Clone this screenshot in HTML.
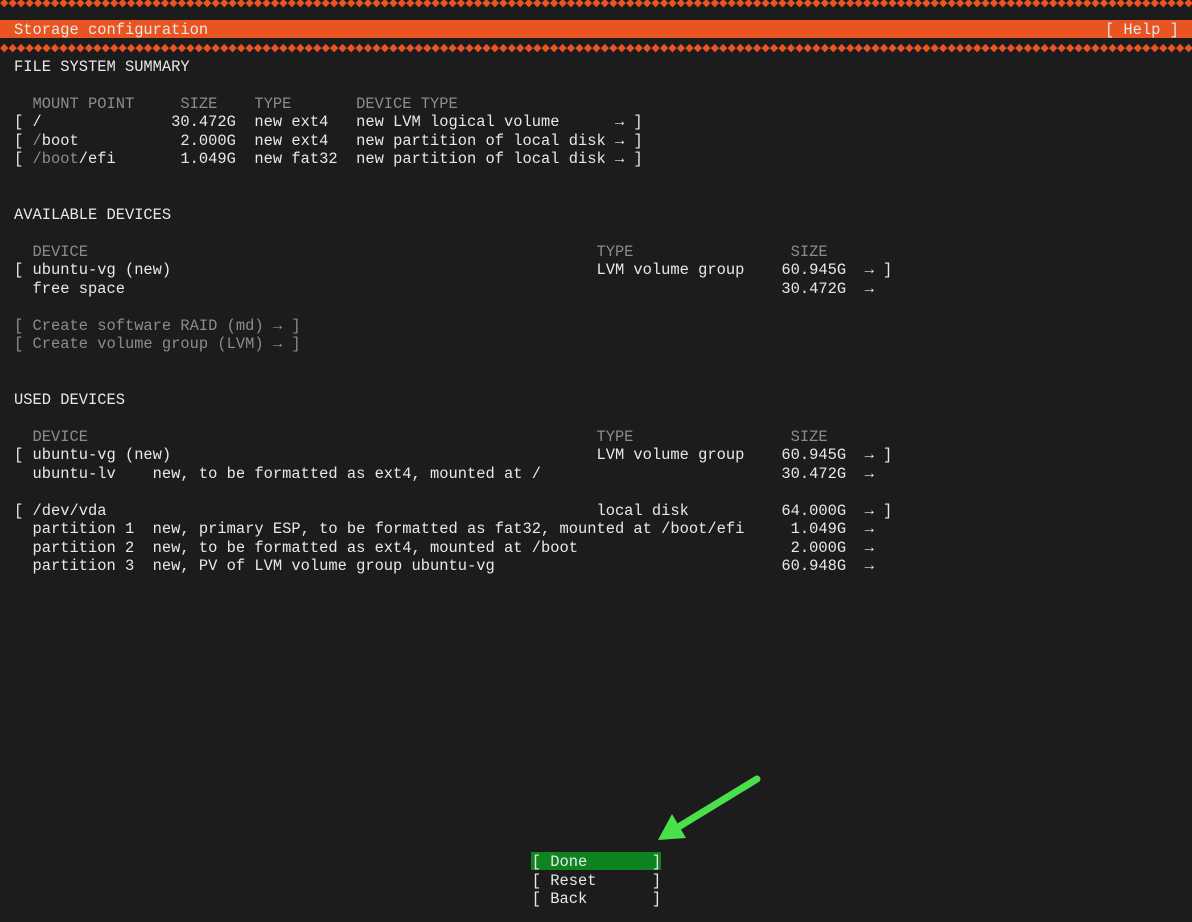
<!DOCTYPE html>
<html><head><meta charset="utf-8"><style>
html,body{margin:0;padding:0;background:#1c1c1c;width:1192px;height:922px;overflow:hidden}
pre{position:absolute;left:14px;top:2px;margin:0;font-family:"Liberation Mono","DejaVu Sans Mono",monospace;font-size:15.42px;line-height:18.5px;color:#e8e8e8;white-space:pre}
.d{color:#8c8c8c}
.bar{position:absolute;left:0;top:20px;width:1192px;height:18.45px;background:#e95420}
.dia{position:absolute;left:0;width:1192px;height:14px;overflow:hidden;color:#e95420;font-family:"DejaVu Sans",sans-serif;font-size:11px;line-height:14px;white-space:nowrap;letter-spacing:0px}
.btn{position:absolute;left:531px;top:851.5px;width:130px;height:18.45px;background:#0e8420}
</style></head><body>
<div class="dia" style="top:-4px">◆◆◆◆◆◆◆◆◆◆◆◆◆◆◆◆◆◆◆◆◆◆◆◆◆◆◆◆◆◆◆◆◆◆◆◆◆◆◆◆◆◆◆◆◆◆◆◆◆◆◆◆◆◆◆◆◆◆◆◆◆◆◆◆◆◆◆◆◆◆◆◆◆◆◆◆◆◆◆◆◆◆◆◆◆◆◆◆◆◆◆◆◆◆◆◆◆◆◆◆◆◆◆◆◆◆◆◆◆◆◆◆◆◆◆◆◆◆◆◆◆◆◆◆◆◆◆◆◆◆◆◆◆◆◆◆◆◆◆◆◆◆◆</div>
<div class="dia" style="top:41px">◆◆◆◆◆◆◆◆◆◆◆◆◆◆◆◆◆◆◆◆◆◆◆◆◆◆◆◆◆◆◆◆◆◆◆◆◆◆◆◆◆◆◆◆◆◆◆◆◆◆◆◆◆◆◆◆◆◆◆◆◆◆◆◆◆◆◆◆◆◆◆◆◆◆◆◆◆◆◆◆◆◆◆◆◆◆◆◆◆◆◆◆◆◆◆◆◆◆◆◆◆◆◆◆◆◆◆◆◆◆◆◆◆◆◆◆◆◆◆◆◆◆◆◆◆◆◆◆◆◆◆◆◆◆◆◆◆◆◆◆◆◆◆</div>
<div class="bar"></div>
<div class="btn"></div>
<pre>

Storage configuration                                                                                                 [ Help ]

FILE SYSTEM SUMMARY

<span class="d">  MOUNT POINT     SIZE    TYPE       DEVICE TYPE</span>
[ /              30.472G  new ext4   new LVM logical volume      → ]
[ <span class="d">/</span>boot           2.000G  new ext4   new partition of local disk → ]
[ <span class="d">/boot</span>/efi       1.049G  new fat32  new partition of local disk → ]


AVAILABLE DEVICES

<span class="d">  DEVICE                                                       TYPE                 SIZE</span>
[ ubuntu-vg (new)                                              LVM volume group    60.945G  → ]
  free space                                                                       30.472G  →

<span class="d">[ Create software RAID (md) → ]</span>
<span class="d">[ Create volume group (LVM) → ]</span>


USED DEVICES

<span class="d">  DEVICE                                                       TYPE                 SIZE</span>
[ ubuntu-vg (new)                                              LVM volume group    60.945G  → ]
  ubuntu-lv    new, to be formatted as ext4, mounted at /                          30.472G  →

[ /dev/vda                                                     local disk          64.000G  → ]
  partition 1  new, primary ESP, to be formatted as fat32, mounted at /boot/efi     1.049G  →
  partition 2  new, to be formatted as ext4, mounted at /boot                       2.000G  →
  partition 3  new, PV of LVM volume group ubuntu-vg                               60.948G  →















                                                        [ Done       ]
                                                        [ Reset      ]
                                                        [ Back       ]
</pre>
<svg style="position:absolute;left:0;top:0" width="1192" height="922">
<line x1="757" y1="779" x2="680" y2="826" stroke="#4be04b" stroke-width="7" stroke-linecap="round"/>
<polygon points="658,840 672,814 686,838" fill="#4be04b"/>
</svg>
</body></html>
